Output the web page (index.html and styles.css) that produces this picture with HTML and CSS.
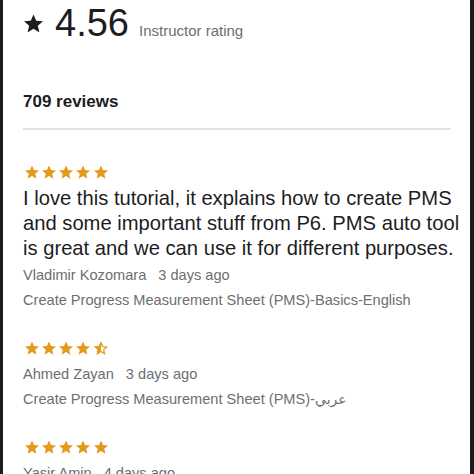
FILE: index.html
```html
<!DOCTYPE html>
<html>
<head>
<meta charset="utf-8">
<link rel="stylesheet" href="styles.css">
</head>
<body>
<div class="frame">
  <div class="panel">
    <div class="rating">
      <svg class="big-star" viewBox="2 2 20 19"><path d="M12 2.5l2.9 6.6 7.1.6-5.4 4.7 1.6 7-6.2-3.7-6.2 3.7 1.6-7L2 9.7l7.1-.6z"/></svg>
      <span class="score">4.56</span>
      <span class="rating-label">Instructor rating</span>
    </div>
    <div class="count">709 reviews</div>
    <div class="divider"></div>

    <div class="review">
      <div class="stars">
        <svg viewBox="2 2 20 19"><path d="M12 2.5l2.9 6.6 7.1.6-5.4 4.7 1.6 7-6.2-3.7-6.2 3.7 1.6-7L2 9.7l7.1-.6z"/></svg>
        <svg viewBox="2 2 20 19"><path d="M12 2.5l2.9 6.6 7.1.6-5.4 4.7 1.6 7-6.2-3.7-6.2 3.7 1.6-7L2 9.7l7.1-.6z"/></svg>
        <svg viewBox="2 2 20 19"><path d="M12 2.5l2.9 6.6 7.1.6-5.4 4.7 1.6 7-6.2-3.7-6.2 3.7 1.6-7L2 9.7l7.1-.6z"/></svg>
        <svg viewBox="2 2 20 19"><path d="M12 2.5l2.9 6.6 7.1.6-5.4 4.7 1.6 7-6.2-3.7-6.2 3.7 1.6-7L2 9.7l7.1-.6z"/></svg>
        <svg viewBox="2 2 20 19"><path d="M12 2.5l2.9 6.6 7.1.6-5.4 4.7 1.6 7-6.2-3.7-6.2 3.7 1.6-7L2 9.7l7.1-.6z"/></svg>
      </div>
      <p class="text">I love this tutorial, it explains how to create PMS and some important stuff from P6. PMS auto tool is great and we can use it for different purposes.</p>
      <div class="meta"><span>Vladimir Kozomara</span><span>3 days ago</span></div>
      <div class="course">Create Progress Measurement Sheet (PMS)-Basics-English</div>
    </div>

    <div class="review">
      <div class="stars">
        <svg viewBox="2 2 20 19"><path d="M12 2.5l2.9 6.6 7.1.6-5.4 4.7 1.6 7-6.2-3.7-6.2 3.7 1.6-7L2 9.7l7.1-.6z"/></svg>
        <svg viewBox="2 2 20 19"><path d="M12 2.5l2.9 6.6 7.1.6-5.4 4.7 1.6 7-6.2-3.7-6.2 3.7 1.6-7L2 9.7l7.1-.6z"/></svg>
        <svg viewBox="2 2 20 19"><path d="M12 2.5l2.9 6.6 7.1.6-5.4 4.7 1.6 7-6.2-3.7-6.2 3.7 1.6-7L2 9.7l7.1-.6z"/></svg>
        <svg viewBox="2 2 20 19"><path d="M12 2.5l2.9 6.6 7.1.6-5.4 4.7 1.6 7-6.2-3.7-6.2 3.7 1.6-7L2 9.7l7.1-.6z"/></svg>
        <svg viewBox="2 2 20 19" class="half"><path class="outline" d="M12 4.3l2.4 5.5 5.9.5-4.5 3.9 1.3 5.8-5.1-3.1-5.1 3.1 1.3-5.8-4.5-3.9 5.9-.5z"/><path d="M12 2.5v14.2l-6.2 3.7 1.6-7L2 9.7l7.1-.6z"/></svg>
      </div>
      <div class="meta first"><span>Ahmed Zayan</span><span>3 days ago</span></div>
      <div class="course">Create Progress Measurement Sheet (PMS)-<span lang="ar">عربي</span></div>
    </div>

    <div class="review">
      <div class="stars">
        <svg viewBox="2 2 20 19"><path d="M12 2.5l2.9 6.6 7.1.6-5.4 4.7 1.6 7-6.2-3.7-6.2 3.7 1.6-7L2 9.7l7.1-.6z"/></svg>
        <svg viewBox="2 2 20 19"><path d="M12 2.5l2.9 6.6 7.1.6-5.4 4.7 1.6 7-6.2-3.7-6.2 3.7 1.6-7L2 9.7l7.1-.6z"/></svg>
        <svg viewBox="2 2 20 19"><path d="M12 2.5l2.9 6.6 7.1.6-5.4 4.7 1.6 7-6.2-3.7-6.2 3.7 1.6-7L2 9.7l7.1-.6z"/></svg>
        <svg viewBox="2 2 20 19"><path d="M12 2.5l2.9 6.6 7.1.6-5.4 4.7 1.6 7-6.2-3.7-6.2 3.7 1.6-7L2 9.7l7.1-.6z"/></svg>
        <svg viewBox="2 2 20 19"><path d="M12 2.5l2.9 6.6 7.1.6-5.4 4.7 1.6 7-6.2-3.7-6.2 3.7 1.6-7L2 9.7l7.1-.6z"/></svg>
      </div>
      <div class="meta first"><span>Yasir Amin</span><span>4 days ago</span></div>
    </div>
  </div>
</div>
</body>
</html>
```
FILE: styles.css
```css
* { box-sizing: border-box; }
html, body { margin: 0; padding: 0; background: #1c1d1f; }
body { width: 474px; height: 474px; overflow: hidden; font-family: "Liberation Sans", Arial, sans-serif; color: #1c1d1f; }
.frame { height: 474px; padding: 0 3px 0 3px; display: flex; }
.panel { flex: 1; background: #fff; padding: 0 20px 0 20px; margin-right: 1px; overflow: hidden; }
.rating { display: flex; align-items: center; height: 46px; }
.big-star { width: 19px; height: 18px; fill: #1c1d1f; margin: 0 12px 0 1px; }
.score { font-size: 38px; line-height: 46px; margin-right: 10px; }
.rating-label { font-size: 15px; color: #6a6f73; margin-top: 14px; }
.count { font-size: 17px; font-weight: 700; margin-top: 46px; line-height: 20px; }
.divider { height: 2px; background: #e4e4e4; margin-top: 16px; width: 428px; }
.review { padding-top: 35px; }
.review + .review { padding-top: 28px; }
.stars { display: flex; gap: 3.3px; height: 13px; margin-left: 1.5px; }
.stars svg { width: 14px; height: 13.5px; fill: #e39a1d; }
.stars svg .outline { fill: none; stroke: #e39a1d; stroke-width: 1.8; }
.text { margin: 8px -12px 0 0; font-size: 20.2px; line-height: 25px; color: #1c1d1f; }
.meta { margin-top: 2px; font-size: 14.6px; color: #6a6f73; line-height: 25px; display: flex; gap: 12px; }
.meta.first { margin-top: 8px; }
.course { font-size: 14.6px; color: #6a6f73; line-height: 25px; }
[lang="ar"] { font-family: "DejaVu Sans", sans-serif; font-size: 14px; }
```
